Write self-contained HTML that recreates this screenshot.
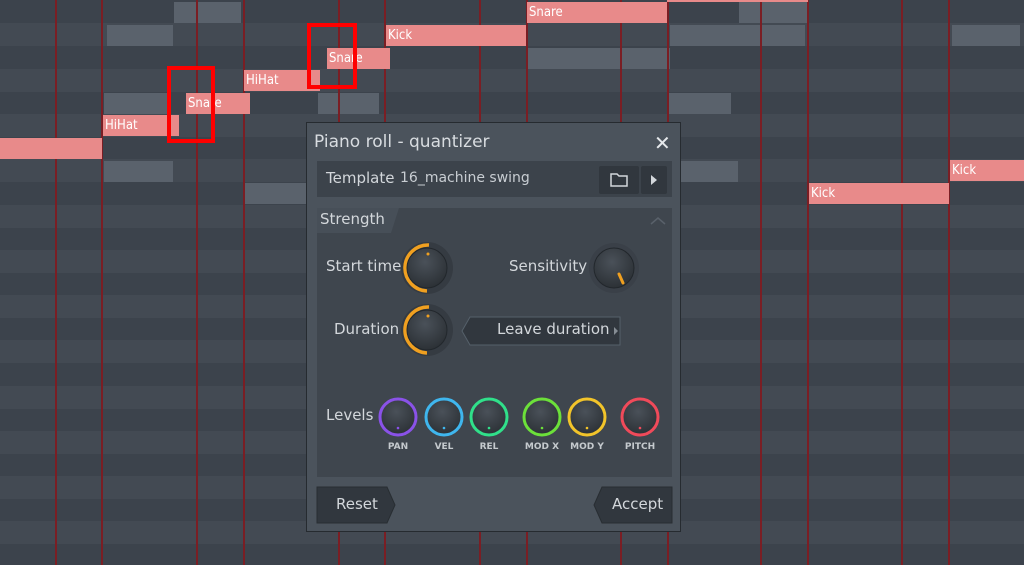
<!DOCTYPE html>
<html><head><meta charset="utf-8"><style>
*{margin:0;padding:0;box-sizing:border-box}
body{width:1024px;height:565px;overflow:hidden;background:#3c434c;font-family:"Liberation Sans","DejaVu Sans",sans-serif;position:relative}
.row{position:absolute;left:0;width:1024px;height:23px}
.vl{position:absolute;top:0;width:2px;height:565px;background:#7a1e24}
.n{position:absolute;height:21px;background:#e88a8a;color:#fff;font-size:13px;line-height:21px;padding-left:2px;font-family:"Liberation Sans Narrow","DejaVu Sans Condensed",sans-serif;overflow:hidden;white-space:nowrap}
.g{position:absolute;height:21px;background:#5a626c}
.rb{position:absolute;border:4px solid #f00}
.dlg{position:absolute;left:306px;top:122px;width:375px;height:410px;background:#4b535c;border:1px solid #262b30;color:#d3d7db;font-family:"DejaVu Sans","Liberation Sans",sans-serif}
.t{position:absolute;white-space:nowrap}
.lbl{position:absolute;font-size:9px;font-weight:bold;color:#c5cace;text-align:center;width:50px}
</style></head><body>
<div class="row" style="top:23px;background:#434a53"></div>
<div class="row" style="top:69px;background:#434a53"></div>
<div class="row" style="top:114px;background:#434a53"></div>
<div class="row" style="top:159px;background:#434a53"></div>
<div class="row" style="top:205px;background:#434a53"></div>
<div class="row" style="top:250px;background:#434a53"></div>
<div class="row" style="top:295px;background:#434a53"></div>
<div class="row" style="top:340px;background:#434a53"></div>
<div class="row" style="top:386px;background:#434a53"></div>
<div class="row" style="top:431px;background:#434a53"></div>
<div class="row" style="top:476px;background:#434a53"></div>
<div class="row" style="top:521px;background:#434a53"></div>

<div class="g" style="left:174px;top:2px;width:67px"></div>
<div class="g" style="left:739px;top:2px;width:69px"></div>
<div class="g" style="left:107px;top:25px;width:66px"></div>
<div class="g" style="left:670px;top:25px;width:135px"></div>
<div class="g" style="left:952px;top:25px;width:68px"></div>
<div class="g" style="left:527px;top:48px;width:143px"></div>
<div class="g" style="left:104px;top:93px;width:66px"></div>
<div class="g" style="left:318px;top:93px;width:61px"></div>
<div class="g" style="left:668px;top:93px;width:63px"></div>
<div class="g" style="left:104px;top:161px;width:69px"></div>
<div class="g" style="left:668px;top:161px;width:70px"></div>
<div class="g" style="left:245px;top:183px;width:62px"></div>

<div class="vl" style="left:55px"></div><div class="vl" style="left:101px"></div>
<div class="vl" style="left:196px"></div><div class="vl" style="left:243px"></div>
<div class="vl" style="left:338px"></div><div class="vl" style="left:384px"></div>
<div class="vl" style="left:479px"></div><div class="vl" style="left:526px"></div>
<div class="vl" style="left:620px"></div><div class="vl" style="left:667px"></div>
<div class="vl" style="left:760px"></div><div class="vl" style="left:807px"></div>
<div class="vl" style="left:901px"></div><div class="vl" style="left:948px"></div>

<div class="n" style="left:667px;top:0;height:2px;width:141px"></div>
<div class="n" style="left:527px;top:2px;width:140px">Snare</div>
<div class="n" style="left:386px;top:25px;width:140px">Kick</div>
<div class="n" style="left:327px;top:48px;width:63px">Snare</div>
<div class="n" style="left:244px;top:70px;width:76px">HiHat</div>
<div class="n" style="left:186px;top:93px;width:64px">Snare</div>
<div class="n" style="left:103px;top:115px;width:76px">HiHat</div>
<div class="n" style="left:0;top:138px;width:102px"></div>
<div class="n" style="left:950px;top:160px;width:74px">Kick</div>
<div class="n" style="left:809px;top:183px;width:140px">Kick</div>

<div class="rb" style="left:167px;top:66px;width:48px;height:77px"></div>
<div class="rb" style="left:307px;top:23px;width:50px;height:66px"></div>

<div class="dlg">
 <div class="t" style="left:7px;top:9px;font-size:17px;color:#d8dce0">Piano roll - quantizer</div>
 <div class="t" style="left:347px;top:8px;font-size:20px;color:#e6e9ec">✕</div>
 <div style="position:absolute;left:10px;top:38px;width:355px;height:36px;background:#3c434b"></div>
 <div class="t" style="left:19px;top:46px;font-size:15px">Template</div>
 <div class="t" style="left:93px;top:47px;font-size:14px;color:#c8cdd2">16_machine swing</div>
 <div style="position:absolute;left:292px;top:43px;width:40px;height:28px;background:#31373e;border-radius:2px"></div>
 <svg style="position:absolute;left:303px;top:49px" width="18" height="15"><path d="M1 2h6l2 2h8v10H1z" fill="none" stroke="#d3d7db" stroke-width="1.5"/></svg>
 <div style="position:absolute;left:334px;top:43px;width:26px;height:28px;background:#31373e;border-radius:2px"></div>
 <svg style="position:absolute;left:343px;top:51px" width="8" height="12"><path d="M1 1l6 5-6 5z" fill="#d3d7db"/></svg>
 <div style="position:absolute;left:10px;top:85px;width:355px;height:269px;background:#3f464e"></div>
 <svg style="position:absolute;left:10px;top:85px" width="82" height="25"><path d="M0 0h82l-8 25H0z" fill="#474f58"/></svg>
 <div class="t" style="left:13px;top:87px;font-size:15px">Strength</div>
 <svg style="position:absolute;left:343px;top:93px" width="16" height="9"><path d="M1 8l7-6 7 6" fill="none" stroke="#59616a" stroke-width="1.5"/></svg>
 <div class="t" style="left:19px;top:134px;font-size:15px">Start time</div>
 <div class="t" style="left:202px;top:134px;font-size:15px">Sensitivity</div>
 <div class="t" style="left:27px;top:197px;font-size:15px">Duration</div>
 <svg style="position:absolute;left:0;top:0" width="375" height="410">
  <defs><radialGradient id="k" cx="45%" cy="35%" r="65%"><stop offset="0" stop-color="#4a5159"/><stop offset="1" stop-color="#2c3136"/></radialGradient></defs>
  <g transform="translate(120,145)"><circle r="26" fill="#353b42"/><path d="M2 -23A23 23 0 0 0 0 23" fill="none" stroke="#f0a020" stroke-width="3.5"/><circle r="20" fill="url(#k)" stroke="#22272c"/><circle cx="1" cy="-14" r="1.5" fill="#f0a020"/></g>
  <g transform="translate(307,145)"><circle r="25" fill="#3a4048"/><circle r="20" fill="url(#k)" stroke="#22272c"/><path d="M5 6l4 9" stroke="#f0a020" stroke-width="3" stroke-linecap="round"/></g>
  <g transform="translate(120,207)"><circle r="26" fill="#353b42"/><path d="M2 -23A23 23 0 0 0 0 23" fill="none" stroke="#f0a020" stroke-width="3.5"/><circle r="20" fill="url(#k)" stroke="#22272c"/><circle cx="1" cy="-14" r="1.5" fill="#f0a020"/></g>
  <path d="M163 194h150v28H163l-8-14z" fill="#31373e" stroke="#55606a"/>
  <path d="M307 204l4 4-4 4z" fill="#868d94"/>
  <g fill="url(#k)" stroke-width="3">
   <circle cx="91" cy="294" r="18" stroke="#8a52e8"/><circle cx="137" cy="294" r="18" stroke="#3fb6ee"/>
   <circle cx="182" cy="294" r="18" stroke="#30e08a"/><circle cx="235" cy="294" r="18" stroke="#6ce03a"/>
   <circle cx="280" cy="294" r="18" stroke="#f2c42a"/><circle cx="333" cy="294" r="18" stroke="#f04a5a"/>
  </g>
  <circle cx="91" cy="305" r="1.3" fill="#8a52e8"/><circle cx="137" cy="305" r="1.3" fill="#3fb6ee"/>
  <circle cx="182" cy="305" r="1.3" fill="#30e08a"/><circle cx="235" cy="305" r="1.3" fill="#6ce03a"/>
  <circle cx="280" cy="305" r="1.3" fill="#f2c42a"/><circle cx="333" cy="305" r="1.3" fill="#f04a5a"/>
  <path d="M10 364h70l8 18-8 18H10z" fill="#31373e" stroke="#282d32"/>
  <path d="M365 364h-70l-8 18 8 18h70z" fill="#31373e" stroke="#282d32"/>
 </svg>
 <div class="t" style="left:19px;top:283px;font-size:15px">Levels</div>
 <div class="lbl" style="left:66px;top:319px">PAN</div>
 <div class="lbl" style="left:112px;top:319px">VEL</div>
 <div class="lbl" style="left:157px;top:319px">REL</div>
 <div class="lbl" style="left:210px;top:319px">MOD X</div>
 <div class="lbl" style="left:255px;top:319px">MOD Y</div>
 <div class="lbl" style="left:308px;top:319px">PITCH</div>
 <div class="t" style="left:190px;top:197px;font-size:15px">Leave duration</div>
 <div class="t" style="left:29px;top:372px;font-size:15px">Reset</div>
 <div class="t" style="left:305px;top:372px;font-size:15px">Accept</div>
</div>
</body></html>
